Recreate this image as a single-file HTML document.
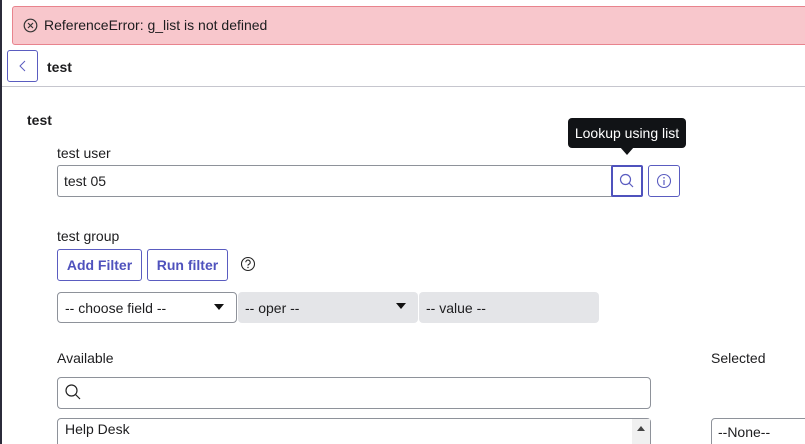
<!DOCTYPE html>
<html style="width:805px;height:444px;overflow:hidden"><head><style>
*{box-sizing:border-box;margin:0;padding:0}
body{width:805px;height:444px;overflow:hidden;background:#fff;font-family:"Liberation Sans",sans-serif;color:#1d1d1f;position:relative;font-size:14px}
.a{position:absolute}
.err{left:12px;top:6px;width:800px;height:39px;background:#f8c7cc;border:1px solid #e8838d;border-radius:3px}
.btn{border:1px solid #5a5cc0;border-radius:3px;background:#fff;color:#4f52bd;font-weight:bold;font-size:14px;display:flex;align-items:center;justify-content:center}
.sel{height:31px;border-radius:4px;font-size:14px;display:flex;align-items:center;padding-left:7px}
</style></head><body>
<div class="a" style="left:0;top:0;width:2px;height:444px;background:#2b2b3a"></div>
<div class="a err"></div>
<svg class="a" style="left:23px;top:18px" width="15" height="15" viewBox="0 0 15 15"><circle cx="7.5" cy="7.5" r="6.3" fill="none" stroke="#333" stroke-width="1.2"/><path d="M5 5L10 10M10 5L5 10" stroke="#333" stroke-width="1.2"/></svg>
<div class="a" style="left:44px;top:17px;font-size:14px">ReferenceError: g_list is not defined</div>
<div class="a btn" style="left:7px;top:50px;width:31px;height:32px"><svg width="10" height="12" viewBox="0 0 10 12"><path d="M7 1L2 6L7 11" fill="none" stroke="#5a5cc0" stroke-width="1"/></svg></div>
<div class="a" style="left:47px;top:59px;font-weight:bold;font-size:14px">test</div>
<div class="a" style="left:2px;top:86px;width:803px;height:1px;background:#c6c6ce"></div>
<div class="a" style="left:27px;top:112px;font-weight:bold;font-size:14px">test</div>
<div class="a" style="left:57px;top:145px">test user</div>
<div class="a" style="left:57px;top:165px;width:556px;height:32px;border:1px solid #8e929a;border-right:none;border-radius:3px 0 0 3px;padding:7px 6px">test 05</div>
<div class="a" style="left:611px;top:165px;width:32px;height:32px;border:2px solid #4f52bd;border-radius:2px;background:#fff"></div>
<svg class="a" style="left:618px;top:172px" width="18" height="18" viewBox="0 0 18 18"><circle cx="7.5" cy="7.5" r="5" fill="none" stroke="#5a5cc0" stroke-width="1.2"/><path d="M11 11L15 15" stroke="#5a5cc0" stroke-width="1.2"/></svg>
<div class="a btn" style="left:648px;top:165px;width:32px;height:32px"><svg width="16" height="16" viewBox="0 0 16 16"><circle cx="8" cy="8" r="6.5" fill="none" stroke="#5a5cc0" stroke-width="1.1"/><path d="M8 7V12" stroke="#5a5cc0" stroke-width="1.2"/><circle cx="8" cy="4.8" r=".8" fill="#5a5cc0"/></svg></div>
<div class="a" style="left:568px;top:118px;width:118px;height:30px;background:#111316;border-radius:4px;color:#fff;font-size:14px;display:flex;align-items:center;justify-content:center">Lookup using list</div>
<div class="a" style="left:620px;top:147px;width:0;height:0;border-left:7px solid transparent;border-right:7px solid transparent;border-top:8px solid #111316"></div>
<div class="a" style="left:57px;top:228px">test group</div>
<div class="a btn" style="left:57px;top:249px;width:85px;height:32px">Add Filter</div>
<div class="a btn" style="left:147px;top:249px;width:81px;height:32px">Run filter</div>
<svg class="a" style="left:240px;top:256px" width="16" height="16" viewBox="0 0 16 16"><circle cx="8" cy="8" r="6.5" fill="none" stroke="#222" stroke-width="1.1"/><path d="M5.8 6.3a2.2 2.2 0 1 1 2.8 2.1c-.5.2-.6.5-.6 1.2" fill="none" stroke="#222" stroke-width="1.1"/><circle cx="8" cy="11.5" r=".7" fill="#222"/></svg>
<div class="a sel" style="left:57px;top:292px;width:180px;border:1px solid #8e929a;background:#fff">-- choose field --<span class="a" style="right:12px;top:11px;border-left:5px solid transparent;border-right:5px solid transparent;border-top:6px solid #111"></span></div>
<div class="a sel" style="left:238px;top:292px;width:180px;background:#e4e5e8">-- oper --<span class="a" style="right:12px;top:11px;border-left:5px solid transparent;border-right:5px solid transparent;border-top:6px solid #111"></span></div>
<div class="a sel" style="left:419px;top:292px;width:180px;background:#e4e5e8">-- value --</div>
<div class="a" style="left:57px;top:350px">Available</div>
<div class="a" style="left:711px;top:350px">Selected</div>
<div class="a" style="left:57px;top:377px;width:594px;height:32px;border:1px solid #8e929a;border-radius:4px"></div>
<svg class="a" style="left:64px;top:383px" width="18" height="18" viewBox="0 0 18 18"><circle cx="7.5" cy="7.5" r="5.5" fill="none" stroke="#222" stroke-width="1.2"/><path d="M11.5 11.5L16 16" stroke="#222" stroke-width="1.2"/></svg>
<div class="a" style="left:57px;top:418px;width:594px;height:40px;border:1px solid #8e929a;border-radius:4px;padding:2px 7px">Help Desk</div>
<div class="a" style="left:632px;top:419px;width:18px;height:30px;background:#f0f0f0"></div>
<div class="a" style="left:637px;top:426px;border-left:4px solid transparent;border-right:4px solid transparent;border-bottom:5px solid #444"></div>
<div class="a" style="left:711px;top:418px;width:100px;height:40px;border:1px solid #8e929a;border-radius:4px;padding:5px 6px">--None--</div>
</body></html>
